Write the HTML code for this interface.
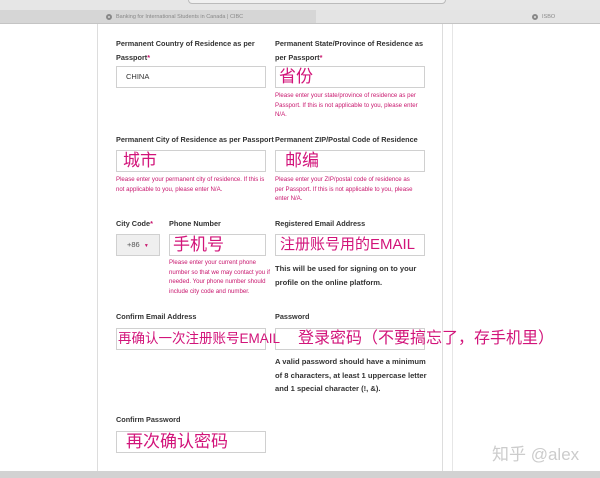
<!DOCTYPE html>
<html><head><meta charset="utf-8"><style>
*{margin:0;padding:0;box-sizing:border-box}
body{width:600px;height:478px;overflow:hidden;background:#fff;position:relative;font-family:"Liberation Sans","Noto Sans CJK SC",sans-serif}
.a{position:absolute}
.lb{position:absolute;font-size:7.3px;font-weight:bold;color:#333;line-height:14px}
.lb i{color:#c8176e;font-style:normal}
.bx{position:absolute;border:1px solid #d0d0d0;background:#fff;height:22px}
.cn{position:absolute;z-index:2;color:#d2147a;font-size:17px;line-height:22px;white-space:nowrap;font-family:"Liberation Sans","Noto Sans CJK SC",sans-serif}
.er{position:absolute;font-size:6.1px;color:#c8176e;line-height:9.5px}
.tx{position:absolute;font-size:7.6px;font-weight:bold;color:#333;line-height:13.5px}
</style></head><body>
<div class="a" style="left:0;top:0;width:600px;height:10px;background:#e6e6e6"></div>
<div class="a" style="left:188px;top:-4px;width:258px;height:8px;border:1px solid #bbb;border-radius:4px;background:#f0f0f0"></div>
<div class="a" style="left:0;top:10px;width:316px;height:14px;background:#d6d6d6"></div>
<div class="a" style="left:316px;top:10px;width:284px;height:14px;background:#e4e4e4"></div>
<div class="a" style="left:0;top:23px;width:600px;height:1px;background:#c4c4c4"></div>
<div class="a" style="left:106px;top:14px;width:6px;height:6px;border-radius:50%;border:2px solid #888"></div>
<div class="a" style="left:116px;top:12px;font-size:5.5px;color:#888;line-height:10px">Banking for International Students in Canada | CIBC</div>
<div class="a" style="left:532px;top:14px;width:6px;height:6px;border-radius:50%;border:2px solid #888"></div>
<div class="a" style="left:542px;top:12px;font-size:5.5px;color:#888;line-height:10px">ISBO</div>
<div class="a" style="left:97px;top:24px;width:1px;height:448px;background:#ddd"></div>
<div class="a" style="left:442px;top:24px;width:1px;height:448px;background:#ddd"></div>
<div class="a" style="left:452px;top:24px;width:1px;height:448px;background:#e6e6e6"></div>
<div class="a" style="left:0;top:471px;width:600px;height:7px;background:#d2d2d2"></div>
<div class="a" style="left:492px;top:440px;font-size:17px;color:#ccc">知乎 @alex</div>

<div class="lb" style="left:116px;top:37px;width:150px">Permanent Country of Residence as per Passport<i>*</i></div>
<div class="lb" style="left:275px;top:37px;width:160px">Permanent State/Province of Residence as per Passport<i>*</i></div>
<div class="bx" style="left:116px;top:66px;width:150px"></div>
<div class="a" style="left:126px;top:66px;font-size:7.5px;line-height:22px;color:#333">CHINA</div>
<div class="bx" style="left:275px;top:66px;width:150px"></div>
<div class="cn" style="left:279px;top:66px">省份</div>
<div class="er" style="left:275px;top:91px;width:145px">Please enter your state/province of residence as per Passport. If this is not applicable to you, please enter N/A.</div>

<div class="lb" style="left:116px;top:133px">Permanent City of Residence as per Passport</div>
<div class="lb" style="left:275px;top:133px">Permanent ZIP/Postal Code of Residence</div>
<div class="bx" style="left:116px;top:150px;width:150px"></div>
<div class="cn" style="left:123px;top:150px">城市</div>
<div class="bx" style="left:275px;top:150px;width:150px"></div>
<div class="cn" style="left:285px;top:150px">邮编</div>
<div class="er" style="left:116px;top:175px;width:152px">Please enter your permanent city of residence. If this is not applicable to you, please enter N/A.</div>
<div class="er" style="left:275px;top:175px;width:142px">Please enter your ZIP/postal code of residence as per Passport. If this is not applicable to you, please enter N/A.</div>

<div class="lb" style="left:116px;top:217px">City Code<i>*</i></div>
<div class="lb" style="left:169px;top:217px">Phone Number</div>
<div class="lb" style="left:275px;top:217px">Registered Email Address</div>
<div class="bx" style="left:116px;top:234px;width:44px;background:#efefef"></div>
<div class="a" style="left:127px;top:234px;font-size:7.5px;line-height:22px;color:#555">+86 &nbsp;<span style="font-size:5px;color:#c8176e">▼</span></div>
<div class="bx" style="left:169px;top:234px;width:97px"></div>
<div class="cn" style="left:173px;top:234px">手机号</div>
<div class="bx" style="left:275px;top:234px;width:150px"></div>
<div class="cn" style="left:280px;top:234px;font-size:15px">注册账号用的EMAIL</div>
<div class="er" style="left:169px;top:258px;width:102px">Please enter your current phone number so that we may contact you if needed. Your phone number should include city code and number.</div>
<div class="tx" style="left:275px;top:262px;width:150px">This will be used for signing on to your profile on the online platform.</div>

<div class="lb" style="left:116px;top:310px">Confirm Email Address</div>
<div class="lb" style="left:275px;top:310px">Password</div>
<div class="bx" style="left:116px;top:328px;width:150px"></div>
<div class="bx" style="left:275px;top:328px;width:150px"></div>
<div class="cn" style="left:118px;top:328px;font-size:13.5px">再确认一次注册账号EMAIL</div>
<div class="cn" style="left:298px;top:328px;font-size:16px">登录密码（不要搞忘了，存手机里）</div>
<div class="tx" style="left:275px;top:355px;width:160px">A valid password should have a minimum of 8 characters, at least 1 uppercase letter and 1 special character (!, &amp;).</div>

<div class="lb" style="left:116px;top:413px">Confirm Password</div>
<div class="bx" style="left:116px;top:431px;width:150px"></div>
<div class="cn" style="left:126px;top:431px">再次确认密码</div>
</body></html>
